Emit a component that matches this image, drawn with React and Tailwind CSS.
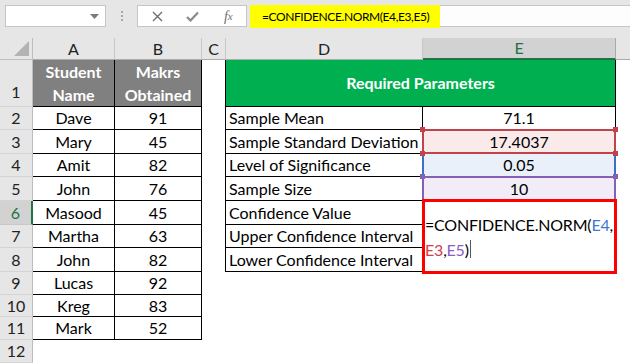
import React from "react";

const FONT = { fontFamily: "Lato, 'Open Sans', sans-serif" };

const rowHeights = [22, 47, 23, 24, 23, 24, 24, 23, 24, 23, 22, 23, 23];

const students = [
  ["Dave", "91"],
  ["Mary", "45"],
  ["Amit", "82"],
  ["John", "76"],
  ["Masood", "45"],
  ["Martha", "63"],
  ["John", "82"],
  ["Lucas", "92"],
  ["Kreg", "83"],
  ["Mark", "52"],
];

const params = [
  "Sample Mean",
  "Sample Standard Deviation",
  "Level of Significance",
  "Sample Size",
  "Confidence Value",
  "Upper Confidence Interval",
  "Lower Confidence Interval",
];

function Sq({ className }) {
  return <div className={"absolute w-[5px] h-[5px] " + className} />;
}

export default function App() {
  const cells = [];

  // column header row
  cells.push(
    <div key="corner" className="bg-[#e6e6e6] border-r border-b border-[#bdbdbd] flex items-end justify-end pr-[3px] pb-[3px]">
      <svg width="15" height="15" viewBox="0 0 15 15">
        <polygon points="0,15 15,0 15,15" fill="#b3b3b3" />
      </svg>
    </div>
  );
  ["A", "B", "C", "D"].forEach((l) =>
    cells.push(
      <div key={"h" + l} className="bg-[#e6e6e6] border-r border-[#c8c8c8] border-b border-b-[#ababab] flex items-center justify-center text-[16px] text-[#222]">
        {l}
      </div>
    )
  );
  cells.push(
    <div key="hE" className="bg-[#d2d2d2] border-r border-[#ababab] border-b-2 border-b-[#217346] flex items-center justify-center text-[16px] text-[#217346]">
      E
    </div>
  );
  cells.push(<div key="hF" className="bg-[#e6e6e6] border-b border-[#ababab]" />);

  // row 1
  cells.push(
    <div key="r1" className="bg-[#e6e6e6] border-r border-[#bdbdbd] border-b border-b-[#d4d4d4] flex items-end justify-center pb-[2px] text-[16px] text-[#222]">
      1
    </div>
  );
  cells.push(
    <div key="a1" className="bg-[#808080] border-r border-b border-black flex flex-col items-center justify-center text-white font-bold text-[16px] leading-[23px]">
      <span>Student</span>
      <span>Name</span>
    </div>
  );
  cells.push(
    <div key="b1" className="bg-[#808080] border-r border-b border-black flex flex-col items-center justify-center text-white font-bold text-[16px] leading-[23px]">
      <span>Makrs</span>
      <span>Obtained</span>
    </div>
  );
  cells.push(<div key="c1" className="bg-white border-r border-black" />);
  cells.push(
    <div key="de1" className="col-span-2 bg-[#00b050] border-r border-b border-black flex items-center justify-center text-white font-bold text-[16px]">
      Required Parameters
    </div>
  );
  cells.push(<div key="f1" className="bg-white" />);

  for (let r = 2; r <= 12; r++) {
    const sel = r === 6;
    cells.push(
      <div
        key={"rh" + r}
        className={
          sel
            ? "bg-[#d2d2d2] border-r-2 border-[#217346] border-b border-b-[#c8c8c8] flex items-center justify-center text-[16px] text-[#217346]"
            : "bg-[#e6e6e6] border-r border-[#bdbdbd] border-b border-b-[#d4d4d4] flex items-center justify-center text-[16px] text-[#222]"
        }
      >
        {r}
      </div>
    );
    const s = students[r - 2];
    if (s) {
      cells.push(
        <div key={"a" + r} className="border-r border-b border-black flex items-center justify-center text-[16px] text-black">
          {s[0]}
        </div>
      );
      cells.push(
        <div key={"b" + r} className="border-r border-b border-black flex items-center justify-center text-[16px] text-black">
          {s[1]}
        </div>
      );
    } else {
      cells.push(<div key={"a" + r} />);
      cells.push(<div key={"b" + r} />);
    }
    const p = params[r - 2];
    cells.push(<div key={"c" + r} className={p ? "border-r border-black" : ""} />);
    if (p) {
      cells.push(
        <div key={"d" + r} className="border-r border-b border-black flex items-center pl-[3px] text-[16px] text-black whitespace-nowrap">
          {p}
        </div>
      );
    } else {
      cells.push(<div key={"d" + r} />);
    }
    if (r === 2) {
      cells.push(
        <div key="e2" className="border-r border-b border-black flex items-center justify-center text-[16px] text-black">
          71.1
        </div>
      );
    } else if (r === 3) {
      cells.push(
        <div key="e3" className="relative z-20 bg-[#fbeaea] border-r border-b border-black flex items-center justify-center text-[16px] text-black">
          17.4037
          <div className="absolute -left-[1px] -top-[1px] -right-[1px] -bottom-[1px] border-2 border-[#c0434b]" />
          <Sq className="bg-[#c0434b] -left-[3px] -top-[3px]" />
          <Sq className="bg-[#c0434b] -right-[3px] -top-[3px]" />
          <Sq className="bg-[#c0434b] -left-[3px] -bottom-[3px]" />
          <Sq className="bg-[#c0434b] -right-[3px] -bottom-[3px]" />
        </div>
      );
    } else if (r === 4) {
      cells.push(
        <div key="e4" className="relative z-10 bg-[#e9f0fa] border-r border-b border-black flex items-center justify-center text-[16px] text-black">
          0.05
          <div className="absolute -left-[1px] -top-[1px] -right-[1px] -bottom-[1px] border-x-2 border-[#3c6fca]" />
        </div>
      );
    } else if (r === 5) {
      cells.push(
        <div key="e5" className="relative z-20 bg-[#f1ecf7] border-r border-b border-black flex items-center justify-center text-[16px] text-black">
          10
          <div className="absolute -left-[1px] -top-[1px] -right-[1px] -bottom-[1px] border-2 border-[#8560b5]" />
          <Sq className="bg-[#8560b5] -left-[3px] -top-[3px]" />
          <Sq className="bg-[#8560b5] -right-[3px] -top-[3px]" />
        </div>
      );
    } else if (r === 6) {
      cells.push(
        <div
          key="e6"
          className="row-span-3 relative z-30 -ml-[1px] -mr-[1px] -mt-[2px] -mb-[2px] bg-white border-[3px] border-[#ff0000] flex flex-col justify-center text-[16px] leading-[25px] text-black whitespace-nowrap tracking-[-0.2px]"
        >
          <div>
            =CONFIDENCE.NORM(<span className="text-[#3f78d0]">E4</span>,
          </div>
          <div className="flex items-center">
            <span className="text-[#d0404b]">E3</span>,<span className="text-[#8a5fc0]">E5</span>)
            <span className="inline-block w-[1px] h-[18px] bg-[#555] ml-[1px]" />
          </div>
        </div>
      );
    } else if (r > 8) {
      cells.push(<div key={"e" + r} />);
    }
    cells.push(<div key={"f" + r} />);
  }

  return (
    <div className="w-[630px] h-[363px] bg-white overflow-hidden" style={FONT}>
      {/* formula bar */}
      <div className="h-[38px] bg-[#e6e6e6] flex items-start pt-[5px]">
        <div className="ml-[5px] w-[101px] h-[22px] bg-white border border-[#c6c6c6] flex items-center justify-end pr-[6px]">
          <svg width="9" height="5" viewBox="0 0 9 5">
            <polygon points="0,0 9,0 4.5,5" fill="#7a7a7a" />
          </svg>
        </div>
        <div className="w-[31px] h-[22px] flex flex-col items-center justify-center gap-[2px]">
          <span className="w-[2px] h-[2px] bg-[#a8a8a8]" />
          <span className="w-[2px] h-[2px] bg-[#a8a8a8]" />
          <span className="w-[2px] h-[2px] bg-[#a8a8a8]" />
        </div>
        <div className="w-[110px] h-[22px] bg-white border border-[#c6c6c6] flex items-center pl-[2px]">
          <span className="w-[36px] flex justify-center">
            <svg width="11" height="11" viewBox="0 0 11 11">
              <path d="M1 1 L10 10 M10 1 L1 10" stroke="#6e6e6e" strokeWidth="1.4" fill="none" />
            </svg>
          </span>
          <span className="w-[36px] flex justify-center">
            <svg width="13" height="11" viewBox="0 0 13 11">
              <path d="M1 6 L4.5 9.5 L12 1.5" stroke="#8a8a8a" strokeWidth="2.2" fill="none" />
            </svg>
          </span>
          <span className="w-[36px] flex justify-center text-[14px] italic text-[#6e6e6e]" style={{ fontFamily: "'Liberation Serif', serif" }}>
            f<span className="text-[11px] relative top-[2px]">x</span>
          </span>
        </div>
        <div className="ml-[3px] flex-1 h-[22px] bg-[#fdfdfd] border-y border-[#c6c6c6] flex">
          <div className="w-[190px] h-[23px] -mt-[1px] bg-[#ffff00] flex items-center pl-[12px] text-[12px] tracking-[-0.4px] text-black whitespace-nowrap">
            =CONFIDENCE.NORM(E4,E3,E5)
          </div>
        </div>
      </div>
      {/* sheet */}
      <div
        className="grid grid-cols-[33px_82px_87px_24px_197px_193px_1fr]"
        style={{ gridTemplateRows: rowHeights.map((h) => h + "px").join(" ") }}
      >
        {cells}
      </div>
    </div>
  );
}
